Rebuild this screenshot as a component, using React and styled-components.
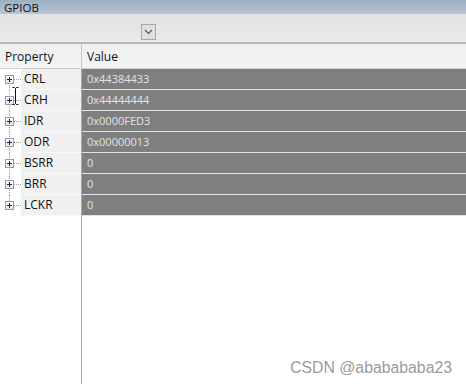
import React from "react";
import styled, { createGlobalStyle } from "styled-components";

const Global = createGlobalStyle`
  html, body { margin: 0; padding: 0; background: #fff; }
  body { width: 466px; height: 384px; overflow: hidden; }
  #root { height: 100%; }
`;

const Window = styled.div`
  position: relative;
  width: 466px;
  height: 384px;
  display: flex;
  flex-direction: column;
  font-family: "Open Sans", "Noto Sans", sans-serif;
  font-size: 11.5px;
  color: #111;
  background: #fff;
`;

const TitleBar = styled.div`
  height: 14px;
  box-sizing: border-box;
  flex: none;
  display: flex;
  align-items: center;
  padding-left: 4px;
  background: linear-gradient(#9dafc3, #b9c6d6);
  font-size: 11.5px;
  line-height: 13px;
`;

const Toolbar = styled.div`
  height: 30px;
  box-sizing: border-box;
  flex: none;
  display: flex;
  align-items: flex-start;
  padding-left: 141px;
  padding-top: 10px;
  background: linear-gradient(#e2e3e2, #e9e9e9);
  border-bottom: 2px solid #b9b9b9;
`;

const DropButton = styled.div`
  width: 15px;
  height: 16px;
  box-sizing: border-box;
  border: 1px solid #a7a7a7;
  background: #e0e0e0;
  display: flex;
  align-items: center;
  justify-content: center;
`;

const Header = styled.div`
  height: 25px;
  box-sizing: border-box;
  flex: none;
  display: flex;
  background: linear-gradient(#efefef, #f4f4f4);
  border-bottom: 1px solid #cfcfcf;
`;

const HeadCell = styled.div`
  width: ${(p) => (p.$w ? `${p.$w}px` : "auto")};
  flex: ${(p) => (p.$w ? "none" : "1")};
  padding-left: 5px;
  display: flex;
  align-items: center;
  border-right: ${(p) => (p.$w ? "1px solid #c8c8c8" : "none")};
  box-sizing: border-box;
  font-size: 12px;
`;

const Row = styled.div`
  height: 21px;
  flex: none;
  display: flex;
`;

const PropCell = styled.div`
  width: 82px;
  flex: none;
  display: flex;
  border-right: 1px solid #a9a9a9;
  box-sizing: border-box;
`;

const Gutter = styled.div`
  position: relative;
  width: 21px;
  flex: none;
  display: flex;
  align-items: center;
  padding-left: 5px;
  box-sizing: border-box;
  &::before {
    content: "";
    position: absolute;
    left: 9px;
    top: ${(p) => (p.$first ? "10px" : "0")};
    bottom: ${(p) => (p.$last ? "11px" : "0")};
    border-left: 1px dotted #a0a0a0;
  }
  &::after {
    content: "";
    position: absolute;
    left: 14px;
    right: 0;
    top: 10px;
    border-top: 1px dotted #a0a0a0;
  }
`;

const Expander = styled.div`
  position: relative;
  z-index: 1;
  width: 9px;
  height: 9px;
  border: 1px solid #9a9aae;
  background: linear-gradient(#ffffff, #e6e6ee);
  box-sizing: border-box;
  margin-top: -1px;
  display: flex;
  align-items: center;
  justify-content: center;
`;

const Label = styled.div`
  flex: 1;
  display: flex;
  align-items: center;
  padding-left: 3px;
  padding-bottom: 1px;
  background: #f0f0f0;
  border-bottom: 1px solid #fafafa;
  font-size: 12px;
`;

const ValueCell = styled.div`
  flex: 1;
  display: flex;
  align-items: center;
  padding-left: 5px;
  padding-bottom: 1px;
  background: #7f7f7f;
  border-bottom: 1px solid #e2e2e2;
  color: #e4e4e4;
  font-size: 11px;
`;

const Filler = styled.div`
  flex: 1;
  display: flex;
`;

const FillLeft = styled.div`
  width: 82px;
  border-right: 1px solid #a9a9a9;
  box-sizing: border-box;
`;

const FillRight = styled.div`
  flex: 1;
  position: relative;
`;

const Watermark = styled.div`
  position: absolute;
  right: 14px;
  bottom: 7px;
  font-family: "Liberation Sans", Arial, sans-serif;
  font-size: 15.8px;
  color: #9b9b9b;
`;

const Cursor = styled.svg`
  position: absolute;
  left: 12px;
  top: 87px;
  z-index: 2;
`;

const rows = [
  ["CRL", "0x44384433"],
  ["CRH", "0x44444444"],
  ["IDR", "0x0000FED3"],
  ["ODR", "0x00000013"],
  ["BSRR", "0"],
  ["BRR", "0"],
  ["LCKR", "0"],
];

const Plus = () => (
  <svg width="5" height="5" viewBox="0 0 5 5">
    <path d="M0 2.5H5M2.5 0V5" stroke="#23234a" strokeWidth="1" />
  </svg>
);

export default function App() {
  return (
    <>
      <Global />
      <Window>
        <TitleBar>GPIOB</TitleBar>
        <Toolbar>
          <DropButton>
            <svg width="9" height="6" viewBox="0 0 9 6">
              <path d="M1 1L4.5 4.5L8 1" fill="none" stroke="#555" strokeWidth="1.1" />
            </svg>
          </DropButton>
        </Toolbar>
        <Header>
          <HeadCell $w={82}>Property</HeadCell>
          <HeadCell>Value</HeadCell>
        </Header>
        {rows.map(([name, val], i) => (
          <Row key={name}>
            <PropCell>
              <Gutter $first={i === 0} $last={i === rows.length - 1}>
                <Expander>
                  <Plus />
                </Expander>
              </Gutter>
              <Label>{name}</Label>
            </PropCell>
            <ValueCell>{val}</ValueCell>
          </Row>
        ))}
        <Filler>
          <FillLeft />
          <FillRight>
            <Watermark>CSDN @ababababa23</Watermark>
          </FillRight>
        </Filler>
        <Cursor width="7" height="18" viewBox="0 0 7 18">
          <path d="M0.5 0.5H2.5L3.5 1.5L4.5 0.5H6.5M3.5 1.5V16.5M0.5 17.5H2.5L3.5 16.5L4.5 17.5H6.5" fill="none" stroke="#111" strokeWidth="1" />
        </Cursor>
      </Window>
    </>
  );
}
